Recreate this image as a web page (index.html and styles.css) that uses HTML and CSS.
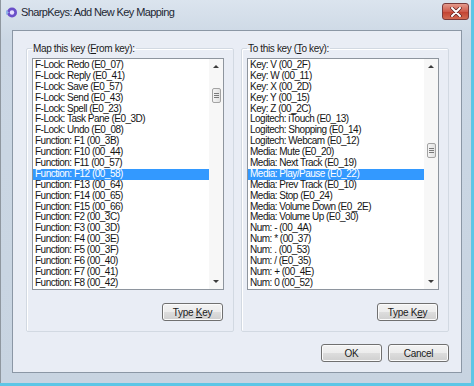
FILE: index.html
```html
<!DOCTYPE html>
<html lang="en">
<head>
    <meta charset="UTF-8">
    <title>SharpKeys: Add New Key Mapping</title>
    <link rel="stylesheet" href="styles.css">
</head>
<body>

    <div class="screen">
        <div class="titlebar">
            <svg class="app-icon" width="13" height="13" viewBox="0 0 13 13">
                <circle cx="7" cy="6.5" r="5" fill="#6a4fc9"/>
                <circle cx="7" cy="6.5" r="2.2" fill="#e6e0ff"/>
                <path d="M1 4 L4 6.5 L1 9 Z" fill="#8fb4e8"/>
            </svg>
            <span class="title">SharpKeys: Add New Key Mapping</span>
            <div class="close-btn">
                <svg width="12" height="10" viewBox="0 0 12 10">
                    <path d="M2 1 L10 9 M10 1 L2 9" stroke="#5a2020" stroke-width="3.4" stroke-linecap="round"/>
                    <path d="M2 1 L10 9 M10 1 L2 9" stroke="#fff" stroke-width="2" stroke-linecap="round"/>
                </svg>
            </div>
        </div>

        <div class="client">
            <div class="groups">
                <fieldset class="group">
                    <legend>Map this key (<u>F</u>rom key):</legend>
                    <div class="listbox">
                        <div class="rows">
                            <div class="row">F-Lock: Redo (E0_07)</div>
                            <div class="row">F-Lock: Reply (E0_41)</div>
                            <div class="row">F-Lock: Save (E0_57)</div>
                            <div class="row">F-Lock: Send (E0_43)</div>
                            <div class="row">F-Lock: Spell (E0_23)</div>
                            <div class="row">F-Lock: Task Pane (E0_3D)</div>
                            <div class="row">F-Lock: Undo (E0_08)</div>
                            <div class="row">Function: F1 (00_3B)</div>
                            <div class="row">Function: F10 (00_44)</div>
                            <div class="row">Function: F11 (00_57)</div>
                            <div class="row selected">Function: F12 (00_58)</div>
                            <div class="row">Function: F13 (00_64)</div>
                            <div class="row">Function: F14 (00_65)</div>
                            <div class="row">Function: F15 (00_66)</div>
                            <div class="row">Function: F2 (00_3C)</div>
                            <div class="row">Function: F3 (00_3D)</div>
                            <div class="row">Function: F4 (00_3E)</div>
                            <div class="row">Function: F5 (00_3F)</div>
                            <div class="row">Function: F6 (00_40)</div>
                            <div class="row">Function: F7 (00_41)</div>
                            <div class="row">Function: F8 (00_42)</div>
                        </div>
                        <div class="scrollbar">
                            <span class="arrow up"></span>
                            <div class="track">
                                <div class="thumb thumb-left"><i></i><i></i><i></i></div>
                            </div>
                            <span class="arrow down"></span>
                        </div>
                    </div>
                    <div class="btn-row">
                        <button class="btn">Type <u>K</u>ey</button>
                    </div>
                </fieldset>

                <fieldset class="group">
                    <legend>To this key (<u>T</u>o key):</legend>
                    <div class="listbox">
                        <div class="rows">
                            <div class="row">Key: V (00_2F)</div>
                            <div class="row">Key: W (00_11)</div>
                            <div class="row">Key: X (00_2D)</div>
                            <div class="row">Key: Y (00_15)</div>
                            <div class="row">Key: Z (00_2C)</div>
                            <div class="row">Logitech: iTouch (E0_13)</div>
                            <div class="row">Logitech: Shopping (E0_14)</div>
                            <div class="row">Logitech: Webcam (E0_12)</div>
                            <div class="row">Media: Mute (E0_20)</div>
                            <div class="row">Media: Next Track (E0_19)</div>
                            <div class="row selected">Media: Play/Pause (E0_22)</div>
                            <div class="row">Media: Prev Track (E0_10)</div>
                            <div class="row">Media: Stop (E0_24)</div>
                            <div class="row">Media: Volume Down (E0_2E)</div>
                            <div class="row">Media: Volume Up (E0_30)</div>
                            <div class="row">Num: - (00_4A)</div>
                            <div class="row">Num: * (00_37)</div>
                            <div class="row">Num: . (00_53)</div>
                            <div class="row">Num: / (E0_35)</div>
                            <div class="row">Num: + (00_4E)</div>
                            <div class="row">Num: 0 (00_52)</div>
                        </div>
                        <div class="scrollbar">
                            <span class="arrow up"></span>
                            <div class="track">
                                <div class="thumb thumb-right"><i></i><i></i><i></i></div>
                            </div>
                            <span class="arrow down"></span>
                        </div>
                    </div>
                    <div class="btn-row">
                        <button class="btn">Type K<u>e</u>y</button>
                    </div>
                </fieldset>
            </div>

            <div class="dialog-buttons">
                <button class="btn">OK</button>
                <button class="btn">Cancel</button>
            </div>
        </div>
    </div>

</body>
</html>
```

FILE: styles.css
```css
/* Page */
body {
    margin: 0;
    font-family: "Liberation Sans", Arial, sans-serif;
    color: #1b1b1b;
}

/* Window frame */
.screen {
    width: 474px;
    height: 386px;
    box-sizing: border-box;
    border-right: 3px solid #5dc6e6;
    border-bottom: 3px solid #5dc6e6;
    background: linear-gradient(#dbe4ee, #cbd7e4 40px, #c8d4e1);
    box-shadow: inset 1px 0 0 #8f979f;
    overflow: hidden;
}

.titlebar {
    height: 30px;
    display: flex;
    align-items: flex-start;
    padding: 5px 2px 0 5px;
    box-sizing: border-box;
}

.app-icon {
    margin-top: 1px;
    margin-right: 3px;
}

.title {
    font-size: 11px;
    letter-spacing: -0.6px;
    color: #1d2733;
    line-height: 14px;
    flex: 1;
}

.close-btn {
    width: 25px;
    height: 15px;
    margin-top: -2px;
    border: 1px solid #7a3a3a;
    border-radius: 3px;
    background: linear-gradient(#e49a8c, #cf5b4c 50%, #c2402f 51%, #d26a52);
    display: flex;
    align-items: center;
    justify-content: center;
}

/* Dialog client area */
.client {
    width: 450px;
    height: 343px;
    margin-left: 12px;
    box-sizing: border-box;
    border: 1px solid #8b97a5;
    background: #e9edf5;
    padding: 12px 12px 0 13px;
}

.groups {
    display: flex;
    gap: 7px;
}

.group {
    width: 208px;
    height: 289px;
    box-sizing: border-box;
    margin: 0;
    padding: 0 9px 0 5px;
    min-width: 0;
    border: 1px solid #d2d9e2;
    border-radius: 2px;
    box-shadow: inset 1px 1px 0 #fff;
}

.group legend {
    font-size: 10px;
    letter-spacing: -0.35px;
    line-height: 11px;
    padding: 0 1px;
    color: #1b1b1b;
}

/* List boxes */
.listbox {
    margin-top: 4px;
    height: 232px;
    box-sizing: border-box;
    border: 1px solid #8e959e;
    background: #fff;
    display: flex;
    overflow: hidden;
}

.rows {
    flex: 1;
    padding-top: 1px;
}

.row {
    height: 10.9px;
    line-height: 10.9px;
    font-size: 10px;
    letter-spacing: -0.5px;
    padding-left: 2px;
    white-space: nowrap;
    color: #141414;
}

.row.selected {
    background: #3399ff;
    color: #fff;
}

.scrollbar {
    width: 14px;
    display: flex;
    flex-direction: column;
    align-items: center;
    background: #f7f7f7;
}

.arrow {
    width: 0;
    height: 0;
    border-left: 3px solid transparent;
    border-right: 3px solid transparent;
}

.arrow.up {
    margin-top: 6px;
    border-bottom: 3px solid #3c3c3c;
}

.arrow.down {
    margin-bottom: 6px;
    border-top: 3px solid #3c3c3c;
}

.track {
    flex: 1;
    width: 100%;
    display: flex;
    flex-direction: column;
    align-items: center;
}

.thumb {
    width: 9px;
    height: 15px;
    box-sizing: border-box;
    border: 1px solid #a3a3a3;
    border-radius: 2px;
    background: linear-gradient(to right, #f4f4f4, #e2e2e2);
    display: flex;
    flex-direction: column;
    justify-content: center;
    align-items: center;
    gap: 1px;
}

.thumb i {
    display: block;
    width: 5px;
    height: 1px;
    background: #7a7a7a;
}

.thumb-left {
    margin-top: 20px;
}

.thumb-right {
    margin-top: 75px;
}

/* Buttons */
.btn-row {
    display: flex;
    justify-content: flex-end;
    margin-top: 13px;
    padding-right: 1px;
}

.btn {
    width: 61px;
    height: 18px;
    padding: 0;
    font-family: "Liberation Sans", Arial, sans-serif;
    font-size: 10px;
    letter-spacing: -0.3px;
    color: #1b1b1b;
    border: 1px solid #707070;
    border-radius: 3px;
    background: linear-gradient(#f3f3f3, #ececec 50%, #dddddd 51%, #cfcfcf);
    box-shadow: inset 0 0 0 1px #fbfbfb;
}

.dialog-buttons {
    display: flex;
    justify-content: flex-end;
    gap: 6px;
    margin-top: 12px;
}
```
